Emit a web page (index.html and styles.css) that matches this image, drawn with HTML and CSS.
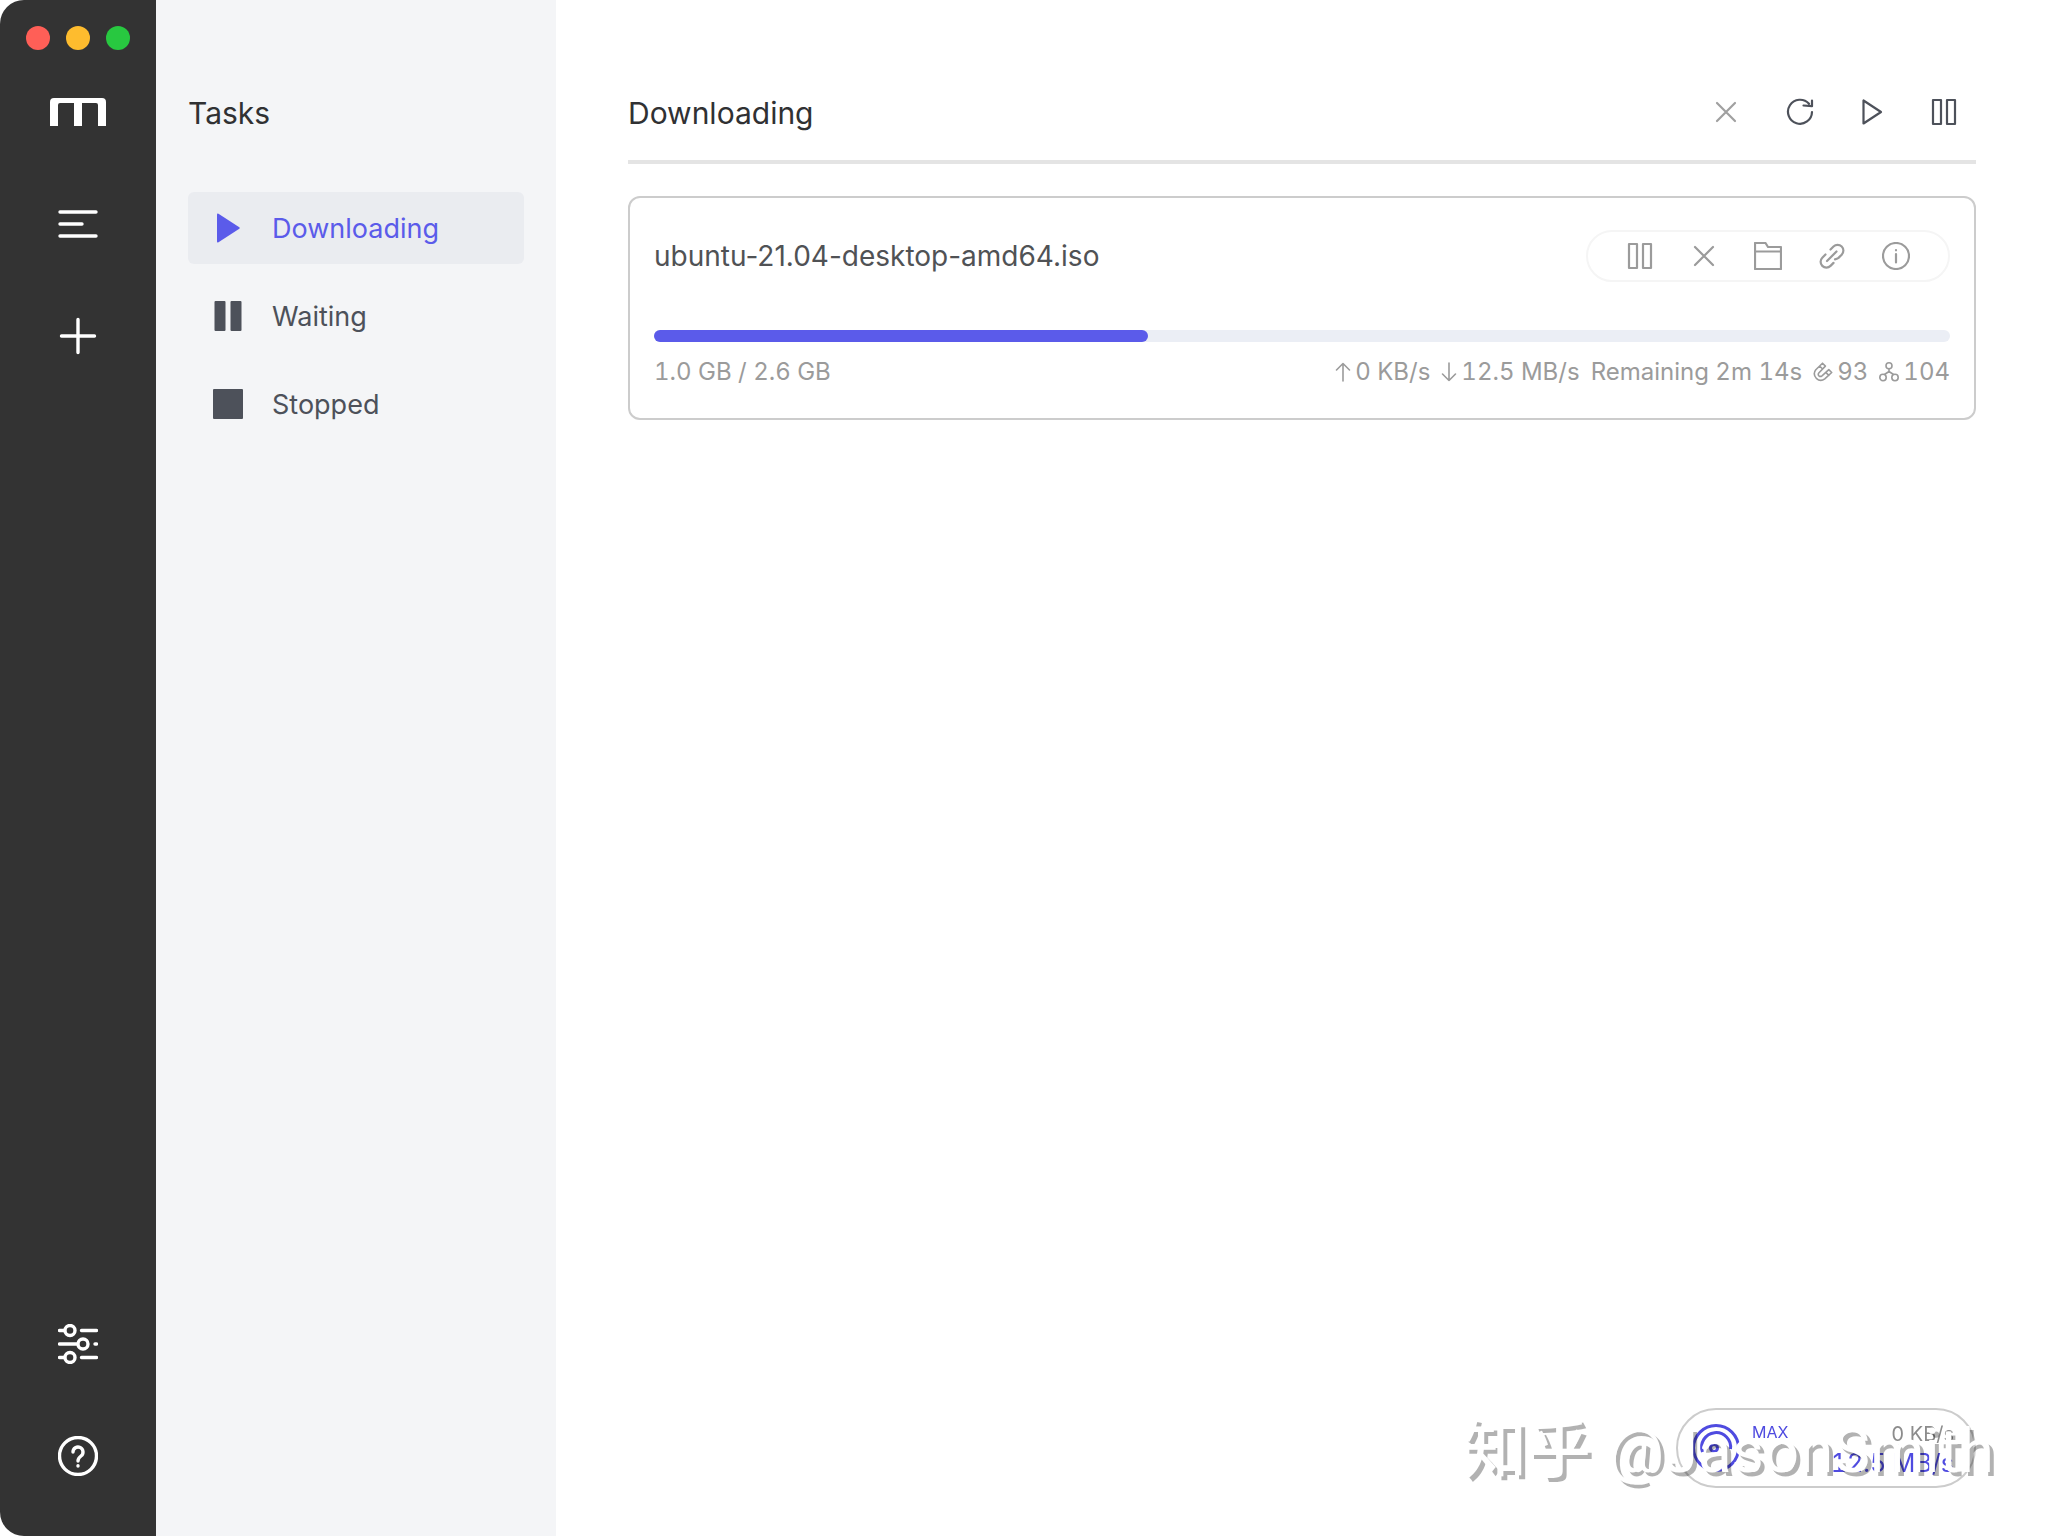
FILE: index.html
```html
<!DOCTYPE html>
<html lang="en">
<head>
<meta charset="utf-8">
<title>Motrix</title>
<link rel="stylesheet" href="styles.css">
</head>
<body>
<div class="app">
  <aside class="aside">
    <div class="lights">
      <button class="light light-close" aria-label="Close"></button>
      <button class="light light-min" aria-label="Minimize"></button>
      <button class="light light-max" aria-label="Zoom"></button>
    </div>
    <a class="logo" href="#" aria-label="Motrix">
      <svg width="56" height="28" viewBox="0 0 56 28"><path fill="#fff" d="M0 28V4a4 4 0 0 1 4-4h48a4 4 0 0 1 4 4v24h-8V7a2 2 0 0 0-2-2H32v23h-8V5H10a2 2 0 0 0-2 2v21z"/></svg>
    </a>
    <nav class="menu" aria-label="Main">
      <button class="menu-btn" aria-label="Task list">
        <svg width="40" height="40" viewBox="0 0 40 40" class="line-white"><path d="M2 8h36M2 20h22M2 32h36"/></svg>
      </button>
      <button class="menu-btn" aria-label="Add task">
        <svg width="40" height="40" viewBox="0 0 40 40" class="line-white"><path d="M20 3.500v33M3.500 20h33"/></svg>
      </button>
    </nav>
    <nav class="menu menu-bottom" aria-label="Settings and help">
      <button class="menu-btn" aria-label="Preferences">
        <svg width="40" height="40" viewBox="0 0 40 40" class="line-white"><path d="M1.500 6.500H6M23.500 6.500h15M1.500 20H19M37 20h1.500M1.500 33.500H6M23.500 33.500h15"/><circle cx="12" cy="6.500" r="5"/><circle cx="25" cy="20" r="5"/><circle cx="12" cy="33.500" r="5"/></svg>
      </button>
      <button class="menu-btn" aria-label="Help">
        <svg width="40" height="40" viewBox="0 0 40 40" class="line-white"><circle cx="20" cy="20" r="18.500"/><path d="M15 16a5 5 0 1 1 8 4c-2 1.500-3 2.500-3 5M20 29.800v.2"/></svg>
      </button>
    </nav>
  </aside>

  <section class="subnav">
    <h2 class="title">Tasks</h2>
    <nav class="subnav-list" aria-label="Tasks">
      <a class="subnav-item active" href="#">
        <svg width="32" height="32" viewBox="0 0 32 32"><path d="M5 2.500Q5 .8 6.500 1.700L27.300 15.200q1.200.8 0 1.600L6.500 30.300Q5 31.200 5 29.500z"/></svg>
        Downloading</a>
      <a class="subnav-item" href="#">
        <svg width="32" height="32" viewBox="0 0 32 32"><rect x="2.500" y="1" width="11" height="30" rx="1"/><rect x="18.500" y="1" width="11" height="30" rx="1"/></svg>
        Waiting</a>
      <a class="subnav-item" href="#">
        <svg width="32" height="32" viewBox="0 0 32 32"><rect x="1" y="1" width="30" height="30" rx="1"/></svg>
        Stopped</a>
    </nav>
  </section>

  <main class="main">
    <header class="panel-head">
      <h1 class="title">Downloading</h1>
      <div class="head-actions">
        <button class="icon-btn" disabled aria-label="Delete selected"><svg width="28" height="28" viewBox="0 0 28 28"><path d="M3 5l18 18M21 5l-18 18"/></svg></button>
        <button class="icon-btn" aria-label="Refresh"><svg width="28" height="28" viewBox="0 0 28 28"><path d="M26 14a12 12 0 1 1-3-8.200M26 2.500V8.200l-8.500-.7"/></svg></button>
        <button class="icon-btn" aria-label="Resume all"><svg width="28" height="28" viewBox="0 0 28 28"><path d="M5.500 2.500v23L23 14z"/></svg></button>
        <button class="icon-btn" aria-label="Pause all"><svg width="28" height="28" viewBox="0 0 28 28"><path d="M3 2h8v24H3zM17 2h8v24h-8z"/></svg></button>
      </div>
    </header>

    <article class="task">
      <div class="task-top">
        <h3 class="task-name">ubuntu-21.04-desktop-amd64.iso</h3>
        <div class="task-actions">
          <button class="icon-btn" aria-label="Pause"><svg width="28" height="28" viewBox="0 0 28 28"><path d="M3 2h8v24H3zM17 2h8v24h-8z"/></svg></button>
          <button class="icon-btn" aria-label="Delete"><svg width="28" height="28" viewBox="0 0 28 28"><path d="M5 5l18 18M23 5L5 23"/></svg></button>
          <button class="icon-btn" aria-label="Open folder"><svg width="28" height="28" viewBox="0 0 28 28"><path d="M1 27V1h10.500l2.500 4h13v22zM1 9.500h26"/></svg></button>
          <button class="icon-btn" aria-label="Copy link"><svg width="28" height="28" viewBox="0 0 28 28"><path d="M9 19l9.500-9.500M12.500 7.500l3-3a5.800 5.800 0 0 1 8.200 0a5.800 5.800 0 0 1 0 8.200l-3.200 3.200q-1.500 1.200-3.500 1.500M7.500 12.500l-3.200 3.200a5.800 5.800 0 0 0 0 8.200a5.800 5.800 0 0 0 8.200 0l3-3"/></svg></button>
          <button class="icon-btn" aria-label="Task details"><svg width="28" height="28" viewBox="0 0 28 28"><circle cx="14" cy="14" r="13"/><path d="M14 12v8.500M14 8v.3"/></svg></button>
        </div>
      </div>
      <div class="bar" role="progressbar" aria-valuenow="38" aria-valuemin="0" aria-valuemax="100" aria-label="Download progress"><div class="bar-fill" style="width: 38.1%"></div></div>
      <div class="task-info">
        <span>1.0 GB / 2.6 GB</span>
        <ul class="stats">
          <li class="stat"><svg width="16" height="20" viewBox="0 0 16 20"><path d="M8 19V1.500M1.500 8L8 1.500L14.500 8"/></svg>0 KB/s</li>
          <li class="stat"><svg width="16" height="20" viewBox="0 0 16 20"><path d="M8 1v17.500M1.500 12L8 18.500L14.500 12"/></svg>12.5 MB/s</li>
          <li class="stat">Remaining 2m 14s</li>
          <li class="stat"><svg width="20" height="20" viewBox="0 0 20 20"><path d="M9.500 1.200l2.900 2.900-6.400 6.600q-1.400 1.700-.1 3.100 1.400 1.300 3.100 0l6.800-6.200 2.900 2.900-6.900 6.300q-4.300 3.400-8.500-.5-3.800-4.300-.5-8.500zM6.800 4.200l2.800 2.800M13 10.600l2.800 2.800"/></svg>93</li>
          <li class="stat"><svg width="20" height="20" viewBox="0 0 20 20"><circle cx="10" cy="3.800" r="3"/><circle cx="4" cy="15.500" r="3.200"/><circle cx="16" cy="15.500" r="3.200"/><path d="M10 6.800V9.500M5.500 12.500L10 9.500l4.500 3"/></svg>104</li>
        </ul>
      </div>
    </article>
  </main>

  <button class="meter">
    <svg width="48" height="48" viewBox="0 0 48 48"><circle cx="24" cy="24" r="22.500"/><path d="M10.500 28a14.500 14.500 0 1 1 28-3"/><circle cx="22" cy="24" r="3.500"/></svg>
    <span class="meter-mode">MAX</span>
    <span class="meter-rates"><span class="meter-up">0 KB/s</span><span class="meter-down">12.5 MB/s</span></span>
  </button>
  <div class="watermark"><span class="watermark-site">知乎</span> @JasonSmith</div>
</div>
</body>
</html>
```
FILE: styles.css
```css
* { box-sizing: border-box; }
body {
  margin: 0;
  background: #fff;
  color: #303133;
  font-family: Inter, "Noto Sans CJK SC", sans-serif;
}
h1, h2, h3, ul { margin: 0; padding: 0; font-weight: 400; list-style: none; }
button { padding: 0; border: 0; background: none; font: inherit; color: inherit; }
a { color: inherit; text-decoration: none; }
svg { display: block; flex: none; }

.app { display: flex; min-height: 100vh; }

.aside {
  display: flex;
  flex-direction: column;
  align-items: center;
  flex: none;
  width: 156px;
  padding: 26px 0 48px;
  background: #333;
  border-radius: 24px 0 0 24px;
}
.lights { display: flex; gap: 16px; }
.light { width: 24px; height: 24px; border-radius: 50%; }
.light-close { background: #ff5f57; }
.light-min { background: #febc2e; }
.light-max { background: #28c840; }
.logo { margin-top: 48px; }
.menu { display: flex; flex-direction: column; gap: 48px; margin-top: 66px; }
.menu-btn { display: grid; place-items: center; width: 64px; height: 64px; }
.menu-bottom { margin-top: auto; }
.line-white { fill: none; stroke: #fff; stroke-width: 3.4; stroke-linecap: round; }

.subnav { flex: none; width: 400px; padding: 94px 32px 0; background: #f4f5f7; }
.title { font-size: 30px; line-height: 38px; }
.subnav-list { display: flex; flex-direction: column; gap: 16px; margin-top: 60px; }
.subnav-item {
  display: flex;
  align-items: center;
  gap: 28px;
  height: 72px;
  padding: 0 24px;
  border-radius: 6px;
  font-size: 27px;
  color: #4d515a;
}
.subnav-item svg { fill: currentColor; }
.active { background: #eaecf0; color: #5b5bea; }

.main { flex: 1; min-width: 0; padding: 80px 72px 0; }
.panel-head {
  display: flex;
  align-items: flex-start;
  justify-content: space-between;
  height: 84px;
  padding-top: 8px;
  border-bottom: 4px solid #e4e4e4;
}
.panel-head .title { margin-top: 6px; }
.head-actions { display: flex; gap: 8px; }
.icon-btn { display: grid; place-items: center; width: 64px; height: 48px; }
.icon-btn svg { fill: none; stroke: currentColor; stroke-width: 2.2; stroke-linecap: round; stroke-linejoin: round; }
.head-actions .icon-btn { color: #4d515a; }
.head-actions .icon-btn:disabled { color: #a0a0a0; }

.task { margin-top: 32px; padding: 32px 24px; border: 2px solid #ccc; border-radius: 12px; }
.task-top { display: flex; align-items: center; justify-content: space-between; }
.task-name { font-size: 28px; color: #505255; }
.task-actions {
  display: flex;
  padding: 0 20px;
  border: 2px solid #f5f5f5;
  border-radius: 26px;
  color: #9b9b9b;
}
.bar { height: 12px; margin-top: 48px; border-radius: 6px; background: #ebeef5; }
.bar-fill { height: 12px; border-radius: 6px; background: #5b5bea; }
.task-info {
  display: flex;
  justify-content: space-between;
  margin-top: 16px;
  font-size: 24px;
  line-height: 28px;
  font-variant-numeric: tabular-nums;
  color: #9b9b9b;
}
.stats { display: flex; gap: 11px; }
.stat { display: flex; align-items: center; gap: 4px; }
.stat svg { fill: none; stroke: currentColor; stroke-width: 1.6; stroke-linecap: round; stroke-linejoin: round; }

.meter {
  position: fixed;
  right: 72px;
  bottom: 48px;
  display: flex;
  width: 300px;
  height: 80px;
  padding: 14px 20px 0 14px;
  border: 2px solid #ccc;
  border-radius: 40px;
  background: #fff;
  color: #4f4be0;
  font-variant-numeric: tabular-nums;
}
.meter svg { fill: none; stroke: currentColor; stroke-width: 3; }
.meter-mode { margin-left: 12px; font-size: 16px; line-height: 16px; }
.meter-rates { display: flex; flex-direction: column; margin-left: auto; text-align: right; }
.meter-up { font-size: 20px; line-height: 20px; color: #8c8c8c; }
.meter-down { font-size: 25px; line-height: 38px; }

.watermark {
  position: fixed;
  right: 54px;
  bottom: 37px;
  font-family: Roboto, "Noto Sans CJK SC", sans-serif;
  font-size: 62px;
  line-height: 96px;
  color: #fff;
  text-shadow: 4px 4px 0 rgba(0, 0, 0, .3);
  pointer-events: none;
}
.watermark-site { margin-right: 2px; font-size: 64px; font-weight: 500; }
```
